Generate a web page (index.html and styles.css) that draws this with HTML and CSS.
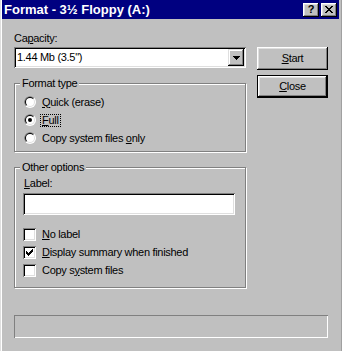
FILE: index.html
```html
<!DOCTYPE html>
<html>
<head>
<meta charset="utf-8">
<link rel="stylesheet" href="styles.css">
</head>
<body>
<div class="window">
  <div class="titlebar">
    <span class="title">Format - 3½ Floppy (A:)</span>
    <div class="caption-btns">
      <div class="cbtn help">?</div>
      <div class="cbtn close-x">
        <svg width="8" height="7" viewBox="0 0 8 7" shape-rendering="crispEdges">
          <path d="M0 0h2v1h-2zM6 0h2v1h-2zM1 1h2v1h-2zM5 1h2v1h-2zM2 2h4v1h-4zM3 3h2v1h-2zM2 4h4v1h-4zM1 5h2v1h-2zM5 5h2v1h-2zM0 6h2v1h-2zM6 6h2v1h-2z" fill="#000"/>
        </svg>
      </div>
    </div>
  </div>
  <div class="body">
    <div class="main">
      <div class="left">
        <div class="lbl">Ca<u>p</u>acity:</div>
        <div class="combo">
          <span class="combo-text">1.44 Mb (3.5")</span>
          <div class="combo-btn">
            <svg width="7" height="4" viewBox="0 0 7 4" shape-rendering="crispEdges"><path d="M0 0h7v1h-7zM1 1h5v1h-5zM2 2h3v1h-3zM3 3h1v1h-1z" fill="#000"/></svg>
          </div>
        </div>
        <div class="group group-format">
          <span class="legend">Format type</span>
          <div class="row">
            <svg class="radio" width="12" height="12" viewBox="0 0 12 12"><circle cx="6" cy="6" r="6" fill="#fff"/><path d="M1.757 10.243A6 6 0 0 1 10.243 1.757Z" fill="#808080"/><circle cx="6" cy="6" r="5" fill="#dfdfdf"/><path d="M2.464 9.536A5 5 0 0 1 9.536 2.464Z" fill="#000"/><circle cx="6" cy="6" r="4" fill="#fff"/></svg>
            <span class="opt"><u>Q</u>uick (erase)</span>
          </div>
          <div class="row">
            <svg class="radio" width="12" height="12" viewBox="0 0 12 12"><circle cx="6" cy="6" r="6" fill="#fff"/><path d="M1.757 10.243A6 6 0 0 1 10.243 1.757Z" fill="#808080"/><circle cx="6" cy="6" r="5" fill="#dfdfdf"/><path d="M2.464 9.536A5 5 0 0 1 9.536 2.464Z" fill="#000"/><circle cx="6" cy="6" r="4" fill="#fff"/><circle cx="6" cy="6" r="2" fill="#000"/></svg>
            <span class="opt focus"><u>F</u>ull</span>
          </div>
          <div class="row">
            <svg class="radio" width="12" height="12" viewBox="0 0 12 12"><circle cx="6" cy="6" r="6" fill="#fff"/><path d="M1.757 10.243A6 6 0 0 1 10.243 1.757Z" fill="#808080"/><circle cx="6" cy="6" r="5" fill="#dfdfdf"/><path d="M2.464 9.536A5 5 0 0 1 9.536 2.464Z" fill="#000"/><circle cx="6" cy="6" r="4" fill="#fff"/></svg>
            <span class="opt">Copy system files <u>o</u>nly</span>
          </div>
        </div>
        <div class="group group-other">
          <span class="legend">Other options</span>
          <div class="lbl"><u>L</u>abel:</div>
          <div class="textbox"></div>
          <div class="checks">
            <div class="row">
              <div class="check"></div>
              <span class="opt"><u>N</u>o label</span>
            </div>
            <div class="row">
              <div class="check">
                <svg width="7" height="7" viewBox="0 0 7 7" shape-rendering="crispEdges"><path d="M6 0h1v3h-1zM5 1h1v3h-1zM4 2h1v3h-1zM3 3h1v3h-1zM2 4h1v3h-1zM1 3h1v3h-1zM0 2h1v3h-1z" fill="#000"/></svg>
              </div>
              <span class="opt"><u>D</u>isplay summary when finished</span>
            </div>
            <div class="row">
              <div class="check"></div>
              <span class="opt">Copy s<u>y</u>stem files</span>
            </div>
          </div>
        </div>
      </div>
      <div class="right">
        <div class="btn"><u>S</u>tart</div>
        <div class="btn default"><u>C</u>lose</div>
      </div>
    </div>
    <div class="progress"></div>
  </div>
</div>
</body>
</html>
```
FILE: styles.css
```css
* { box-sizing: border-box; }
html, body { margin: 0; padding: 0; background: #c0c0c0; }
body {
  font-family: "Liberation Sans", Arial, sans-serif;
  font-size: 11px;
  letter-spacing: -0.3px;
  color: #000;
}
u { text-decoration: underline; text-underline-offset: 1px; }

.window {
  width: 342px;
  height: 351px;
  background: #c0c0c0;
  padding: 0 3px 0 2px;
  box-shadow: inset 1px 0 #dfdfdf, inset 2px 0 #fff, inset -1px 0 #a0a0a0;
  display: flex;
  flex-direction: column;
}

.titlebar {
  height: 19px;
  background: #000080;
  display: flex;
  align-items: center;
  justify-content: space-between;
  padding: 0 2px 0 2px;
}
.title {
  color: #fff;
  font-weight: bold;
  font-size: 13px;
  letter-spacing: 0;
}
.caption-btns { display: flex; gap: 2px; }
.cbtn {
  width: 16px;
  height: 14px;
  background: #c0c0c0;
  box-shadow: inset -1px -1px #000, inset 1px 1px #fff, inset -2px -2px #808080, inset 2px 2px #dfdfdf;
  display: flex;
  align-items: center;
  justify-content: center;
}
.cbtn.help { font-weight: bold; font-size: 11px; line-height: 14px; padding-bottom: 1px; letter-spacing: 0; }
.cbtn.close-x svg { display: block; margin-top: -1px; }

.body {
  flex: 1;
  padding: 13px 0 0 12px;
  display: flex;
  flex-direction: column;
}
.main {
  display: grid;
  grid-template-columns: 232px 71px;
  column-gap: 11px;
  align-items: start;
}
.left { display: flex; flex-direction: column; }
.lbl { line-height: 13px; height: 13px; margin-bottom: 2px; }

.combo {
  height: 21px;
  background: #fff;
  box-shadow: inset 1px 1px #808080, inset -1px -1px #fff, inset 2px 2px #000, inset -2px -2px #dfdfdf;
  display: flex;
  align-items: center;
  justify-content: space-between;
  padding: 2px 2px 2px 3px;
}
.combo-text { line-height: 13px; }
.combo-btn {
  width: 16px;
  height: 17px;
  background: #c0c0c0;
  box-shadow: inset -1px -1px #000, inset 1px 1px #dfdfdf, inset -2px -2px #808080, inset 2px 2px #fff;
  display: flex;
  align-items: center;
  justify-content: center;
}
.combo-btn svg { display: block; }

.group {
  position: relative;
  border: 1px solid #808080;
  box-shadow: 1px 1px 0 #fff, inset 1px 1px 0 #fff;
}
.legend {
  position: absolute;
  top: -7px;
  left: 5px;
  padding: 0 2px;
  line-height: 13px;
  background: #c0c0c0;
}
.group-format {
  margin-top: 15px;
  height: 69px;
  padding: 9px 0 0 9px;
}
.row {
  height: 18px;
  display: flex;
  align-items: center;
}
.radio { display: block; flex: none; margin-right: 4px; }
.opt {
  line-height: 11px;
  padding: 0 1px;
  border: 1px solid transparent;
}
.opt.focus { border: 1px dotted #000; }

.group-other {
  margin-top: 15px;
  height: 121px;
  padding: 9px 10px 0 8px;
}
.group-other .lbl { margin-left: 1px; margin-bottom: 3px; }
.textbox {
  height: 22px;
  background: #fff;
  box-shadow: inset 1px 1px #808080, inset -1px -1px #fff, inset 2px 2px #000, inset -2px -2px #dfdfdf;
}
.checks { margin-top: 10px; }
.check {
  width: 13px;
  height: 13px;
  flex: none;
  margin-right: 4px;
  background: #fff;
  box-shadow: inset 1px 1px #808080, inset -1px -1px #fff, inset 2px 2px #000, inset -2px -2px #dfdfdf;
  display: flex;
  align-items: center;
  justify-content: center;
}
.check svg { display: block; }

.right {
  display: flex;
  flex-direction: column;
  gap: 5px;
  padding-top: 15px;
}
.btn {
  height: 23px;
  background: #c0c0c0;
  box-shadow: inset -1px -1px #000, inset 1px 1px #fff, inset -2px -2px #808080, inset 2px 2px #dfdfdf;
  display: flex;
  align-items: center;
  justify-content: center;
  line-height: 13px;
}
.btn.default {
  border: 1px solid #000;
}

.progress {
  margin-top: 27px;
  width: 314px;
  height: 23px;
  box-shadow: inset 1px 1px #808080, inset -1px -1px #fff;
}
```
